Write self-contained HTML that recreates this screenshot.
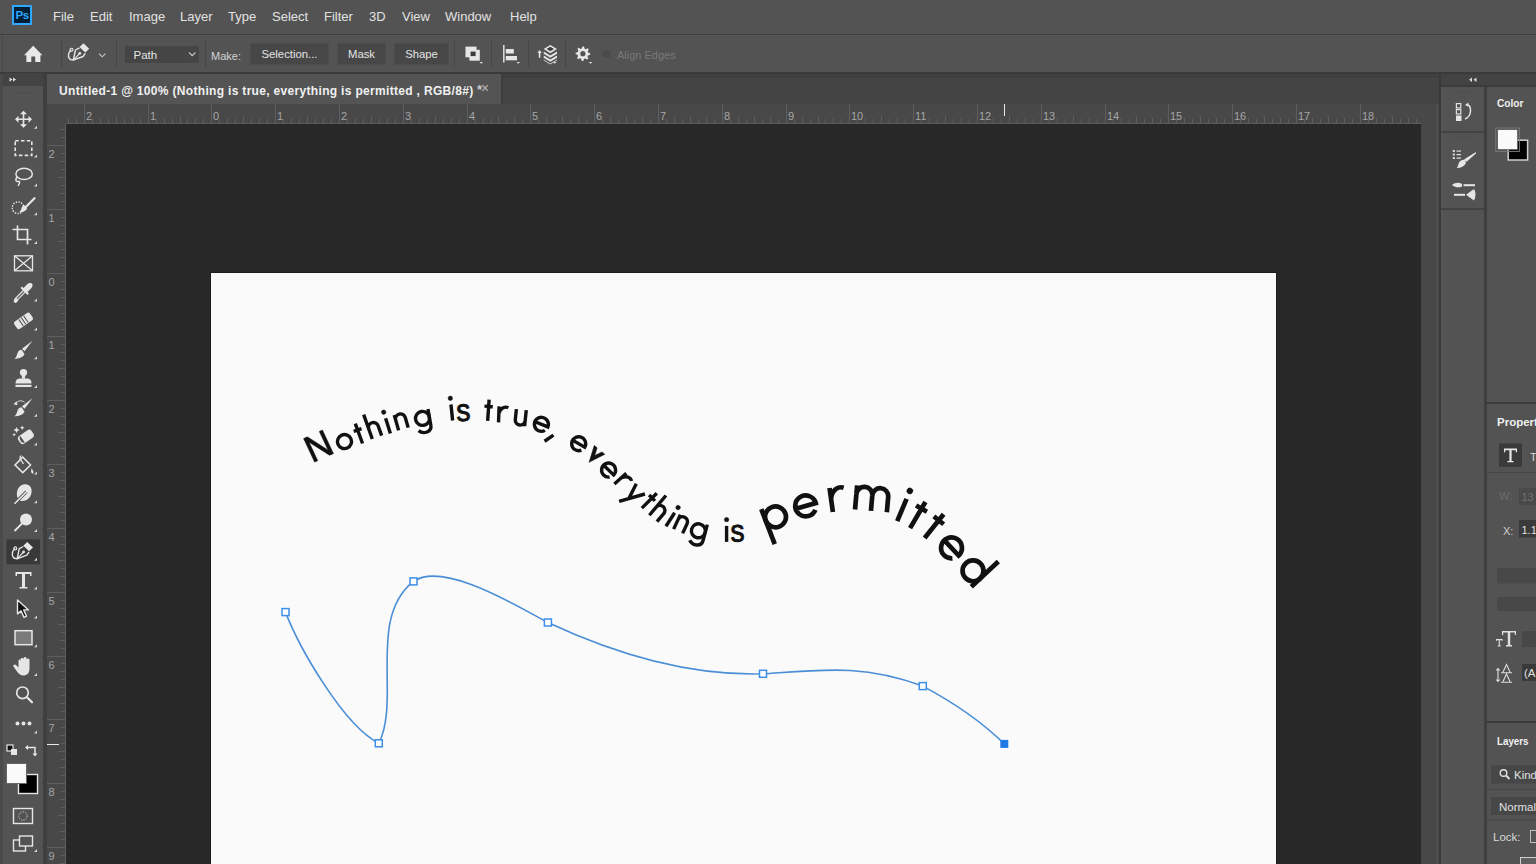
<!DOCTYPE html>
<html><head><meta charset="utf-8">
<style>
*{margin:0;padding:0;box-sizing:border-box}
html,body{width:1536px;height:864px;overflow:hidden;background:#535353;font-family:"Liberation Sans",sans-serif;color:#dcdcdc}
.a{position:absolute}
.m{position:absolute;top:9.5px;font-size:13px;color:#e2e2e2;line-height:14px;white-space:nowrap}
.btn{position:absolute;top:43px;height:22px;background:#474747;border:1px solid #4d4d4d;font-size:11.3px;color:#e4e4e4;text-align:center;line-height:20px;border-radius:1px}
.sep{position:absolute;top:40px;width:1px;height:27px;background:#474747}
svg{position:absolute;left:0;top:0}
</style></head><body>
<!-- menu bar -->
<div class="a" style="left:0;top:0;width:1536px;height:34px;background:#535353"></div>
<div class="a" style="left:12px;top:5px;width:20px;height:20px;background:#001e36;border:2px solid #31a8ff;border-radius:1px"></div>
<div class="a" style="left:15.5px;top:8.5px;font-size:11.5px;color:#31a8ff;line-height:12px;font-weight:bold;letter-spacing:-0.3px">Ps</div>
<span class="m" style="left:53px">File</span>
<span class="m" style="left:90px">Edit</span>
<span class="m" style="left:129px">Image</span>
<span class="m" style="left:180px">Layer</span>
<span class="m" style="left:228px">Type</span>
<span class="m" style="left:272px">Select</span>
<span class="m" style="left:324px">Filter</span>
<span class="m" style="left:369px">3D</span>
<span class="m" style="left:402px">View</span>
<span class="m" style="left:445px">Window</span>
<span class="m" style="left:510px">Help</span>
<!-- options bar -->
<div class="a" style="left:0;top:33.5px;width:1536px;height:1.5px;background:#3f3f3f"></div><div class="a" style="left:0;top:35px;width:1536px;height:1px;background:#575757"></div>
<div class="a" style="left:2px;top:35px;width:1px;height:37px;background:#4a4a4a"></div>
<div class="sep" style="left:61px"></div>
<div class="sep" style="left:116px"></div>
<div class="sep" style="left:205px"></div>
<div class="sep" style="left:454px"></div>
<div class="sep" style="left:491px"></div>
<div class="sep" style="left:528px"></div>
<div class="sep" style="left:565px"></div>
<div class="a" style="left:125px;top:46px;width:74px;height:17px;background:#454545"></div>
<div class="a" style="left:133.5px;top:47.5px;font-size:11.5px;color:#e4e4e4;line-height:14px">Path</div>
<div class="a" style="left:211px;top:48.5px;font-size:11px;color:#d4d4d4;line-height:14px">Make:</div>
<div class="btn" style="left:250px;width:79px">Selection...</div>
<div class="btn" style="left:337px;width:49px">Mask</div>
<div class="btn" style="left:394px;width:55px">Shape</div>
<div class="a" style="left:602px;top:50px;width:9px;height:8px;background:#4a4a4a;border:1px solid #505050"></div>
<div class="a" style="left:617px;top:49px;font-size:11px;color:#787878;line-height:12px">Align Edges</div>
<svg width="700" height="72">
<path d="M33.2,45.8 L24,55.3 H26.4 V62.1 H31.3 V56.5 H35.2 V62.1 H40.4 V55.3 H42.4Z" fill="#e8e8e8"/>
<g transform="translate(79.8,53.3)"><path d="M3.6,-10.1 L9.4,-4.6 L5.5,-0.7 L-0.3,-6.2Z" fill="#e6e6e6"/><path d="M-0.3,-5.5 L-4.3,-3.3 L-6.5,6.8 L3.2,3.2 L5.5,0" fill="none" stroke="#e6e6e6" stroke-width="1.4" stroke-linejoin="round"/><path d="M-6,6.3 L0,0" stroke="#e6e6e6" stroke-width="1.2"/><circle cx="0" cy="0" r="1.4" fill="#e6e6e6"/><path d="M-8.5,-3.5 C-11.5,-1.5 -12,3 -10.5,5 C-9.5,6.5 -8,6.8 -6.5,6.5" fill="none" stroke="#e6e6e6" stroke-width="1.4"/><circle cx="-8.3" cy="-3.6" r="1.5" fill="none" stroke="#e6e6e6" stroke-width="1.1"/></g>
<path d="M99,53.6 L102.2,56.8 L105.4,53.6" fill="none" stroke="#c8c8c8" stroke-width="1.1"/>
<path d="M189,52.5 L192.2,55.7 L195.4,52.5" fill="none" stroke="#c8c8c8" stroke-width="1.1"/>
<rect x="465.5" y="46.6" width="11" height="10.7" fill="#e6e6e6"/><rect x="469.4" y="49.8" width="10.4" height="10.9" fill="#e6e6e6"/><rect x="470.6" y="51.6" width="5" height="4.5" fill="#3a3a3a"/>
<path d="M479.5,62 L483,62 L481.2,63.8Z M516.5,62 L520,62 L518.2,63.8Z M553,62 L556.5,62 L554.8,63.8Z M588.8,62 L592.3,62 L590.5,63.8Z" fill="#e0e0e0"/>
<rect x="503" y="45" width="1.6" height="17.5" fill="#d8d8d8"/><rect x="505.8" y="49" width="8" height="4.5" fill="#e6e6e6"/><rect x="505.8" y="56" width="11.2" height="4.3" fill="#e6e6e6"/>
<path d="M539.6,50 L537.4,53 H538.8 V57.8 H540.4 V53 H541.8Z" fill="#e6e6e6"/>
<path d="M550.3,45 L557,49 L550.3,53.2 L543.7,49Z" fill="#e6e6e6"/><path d="M546.5,49 L550.3,46.8 L554,49 L550.3,51.2Z" fill="#3e3e3e"/>
<path d="M543.7,51.5 L550.3,55.5 L557,51.5 V53.7 L550.3,57.7 L543.7,53.7Z" fill="#e6e6e6"/>
<path d="M543.7,55.5 L550.3,59.5 L557,55.5 V57.7 L550.3,61.7 L543.7,57.7Z" fill="#e6e6e6"/>
<path d="M543.7,59.5 L550.3,63.5 L557,59.5 V60.5 L550.3,64.5 L543.7,60.5Z" fill="#cfcfcf"/>
<path d="M582.54,46.41 L583.97,46.48 L584.69,48.71 L585.62,49.15 L587.80,48.29 L588.76,49.35 L587.69,51.43 L588.04,52.41 L590.19,53.34 L590.12,54.77 L587.89,55.49 L587.45,56.42 L588.31,58.60 L587.25,59.56 L585.17,58.49 L584.19,58.84 L583.26,60.99 L581.83,60.92 L581.11,58.69 L580.18,58.25 L578.00,59.11 L577.04,58.05 L578.11,55.97 L577.76,54.99 L575.61,54.06 L575.68,52.63 L577.91,51.91 L578.35,50.98 L577.49,48.80 L578.55,47.84 L580.63,48.91 L581.61,48.56Z M585.5,53.7 A2.6,2.6 0 1,0 580.3,53.7 A2.6,2.6 0 1,0 585.5,53.7Z" fill="#e6e6e6" fill-rule="evenodd"/>

</svg>
<!-- dark line under options -->
<div class="a" style="left:0;top:72px;width:1536px;height:2px;background:#3a3a3a"></div>
<!-- left toolbar -->
<div class="a" style="left:0;top:74px;width:43px;height:790px;background:#535353"></div>
<div class="a" style="left:0;top:74px;width:3px;height:790px;background:#4a4a4a"></div>
<div class="a" style="left:2.5px;top:72.5px;width:41px;height:13.5px;background:#434343"></div>

<div class="a" style="left:43px;top:74px;width:4px;height:790px;background:#3f3f3f"></div>
<svg width="47" height="864">
<path d="M9.5,77.5 L12.5,79.6 L9.5,81.7Z M13,77.5 L16,79.6 L13,81.7Z" fill="#e0e0e0"/>
<g fill="#444"><circle cx="14" cy="93" r=".8"/><circle cx="18" cy="93" r=".8"/><circle cx="22" cy="93" r=".8"/><circle cx="26" cy="93" r=".8"/><circle cx="30" cy="93" r=".8"/></g>
<rect x="6.5" y="539.3" width="33.5" height="25" fill="#393939"/>
<g transform="translate(23.5,119.3)"><g stroke="#e6e6e6" stroke-width="1.6" fill="none"><path d="M-7,0H7M0,-7V7"/></g><g fill="#e6e6e6"><path d="M-8.5,0 L-5,-3.5 L-5,3.5Z M8.5,0 L5,-3.5 L5,3.5Z M0,-8.5 L-3.5,-5 L3.5,-5Z M0,8.5 L-3.5,5 L3.5,5Z"/></g></g><path d="M37.0,125.8 L37.0,128.8 L34.0,128.8Z" fill="#d8d8d8"/>
<g transform="translate(23.5,148.1)"><rect x="-8.3" y="-7.3" width="16.6" height="14.6" fill="none" stroke="#e6e6e6" stroke-width="1.6" stroke-dasharray="3.5,2.3"/></g><path d="M37.0,154.6 L37.0,157.6 L34.0,157.6Z" fill="#d8d8d8"/>
<g transform="translate(23.5,176.9)"><g fill="none" stroke="#e6e6e6" stroke-width="1.5"><ellipse cx="0.6" cy="-3" rx="8.2" ry="5.6"/><path d="M-6.5,0.5 C-9,3 -7,5 -5,4.5 C-3,4 -4,7 -5.5,9"/></g></g><path d="M37.0,183.4 L37.0,186.4 L34.0,186.4Z" fill="#d8d8d8"/>
<g transform="translate(23.5,205.7)"><circle cx="-5.5" cy="2" r="5.8" fill="none" stroke="#e6e6e6" stroke-width="1.4" stroke-dasharray="1.4,1.3"/><path d="M11,-7.5 L2.5,1" stroke="#e6e6e6" stroke-width="2.2" stroke-linecap="round"/><path d="M2.8,0.5 C1,-1 -1.5,0 -2,2.5 C-2.5,4.5 -3.5,6 -4.5,6.5 C-1,7 2,5.5 3.5,3Z" fill="#e6e6e6"/></g><path d="M37.0,212.2 L37.0,215.2 L34.0,215.2Z" fill="#d8d8d8"/>
<g transform="translate(23.5,234.5)"><g fill="none" stroke="#e6e6e6" stroke-width="1.7"><path d="M-6,-9 V5 H8"/><path d="M-11,-5 H4 V10"/></g></g><path d="M37.0,241.0 L37.0,244.0 L34.0,244.0Z" fill="#d8d8d8"/>
<g transform="translate(23.5,263.3)"><g fill="none" stroke="#e6e6e6" stroke-width="1.3"><rect x="-9" y="-7.5" width="18" height="15"/><path d="M-9,-7.5 L9,7.5 M9,-7.5 L-9,7.5"/></g></g>
<g transform="translate(23.5,292.1)"><path d="M-7,8 L-8,9 M-7.5,7.5 L2,-2" stroke="#e6e6e6" stroke-width="3.6" stroke-linecap="round" fill="none"/><path d="M-6.5,6.5 L1.5,-1.5" stroke="#535353" stroke-width="1.2"/><path d="M0,-4 L4,-8 C5,-9 7.5,-9.5 8.5,-8.5 C9.5,-7.5 9,-5 8,-4 L4,0 L5.5,1.5 L4,3 L-3,-4 L-1.5,-5.5Z" fill="#e6e6e6"/></g><path d="M37.0,298.6 L37.0,301.6 L34.0,301.6Z" fill="#d8d8d8"/>
<g transform="translate(23.5,320.9)"><g transform="rotate(-35)"><rect x="-9.5" y="-4.5" width="19" height="9" rx="2.5" fill="#e6e6e6"/><path d="M-3,-4 V4 M0,-4 V4 M3,-4 V4" stroke="#535353" stroke-width="1"/></g></g><path d="M37.0,327.4 L37.0,330.4 L34.0,330.4Z" fill="#d8d8d8"/>
<g transform="translate(23.5,349.7)"><path d="M9,-9 L1,1.5 L-1.5,-1 Z" fill="#e6e6e6"/><path d="M-1.8,0 C-5,0 -6,3 -6.5,5 C-7,7 -8,8 -9,9 C-5,9 -1,8 1,4.5 Z" fill="#e6e6e6"/></g><path d="M37.0,356.2 L37.0,359.2 L34.0,359.2Z" fill="#d8d8d8"/>
<g transform="translate(23.5,378.5)"><circle cx="0" cy="-6" r="3.6" fill="#e6e6e6"/><rect x="-1.6" y="-4" width="3.2" height="4" fill="#e6e6e6"/><path d="M-8,5 C-8,1 -6,0 -3,0 H3 C6,0 8,1 8,5Z" fill="#e6e6e6"/><rect x="-8" y="6.3" width="16" height="2.2" fill="#e6e6e6"/></g><path d="M37.0,385.0 L37.0,388.0 L34.0,388.0Z" fill="#d8d8d8"/>
<g transform="translate(23.5,407.3)"><path d="M9,-9 L1,1.5 L-1.5,-1 Z" fill="#e6e6e6"/><path d="M-1.8,0 C-5,0 -6,3 -6.5,5 C-7,7 -8,8 -9,9 C-5,9 -1,8 1,4.5 Z" fill="#e6e6e6"/><path d="M-10,-3 L-7,-6 L-6,-2Z" fill="#e6e6e6"/><path d="M-7,-4.5 C-5,-7 -1,-7 1,-5" fill="none" stroke="#e6e6e6" stroke-width="1"/></g><path d="M37.0,413.8 L37.0,416.8 L34.0,416.8Z" fill="#d8d8d8"/>
<g transform="translate(23.5,436.1)"><g transform="rotate(-35) translate(1.5,2)"><rect x="-8" y="-4.5" width="16" height="9" rx="3" fill="#e6e6e6"/><path d="M-4,-4 C-7,-4 -7.5,4 -4,4" fill="#535353"/></g><path d="M-8,-7 l1,-2 l1,2 l2,1 l-2,1 l-1,2 l-1,-2 l-2,-1Z M-2,-9 l.7,-1.5 l.7,1.5 l1.5,.7 l-1.5,.7 l-.7,1.5 l-.7,-1.5 l-1.5,-.7Z M-10,-2 l.6,-1.2 l.6,1.2 l1.2,.6 l-1.2,.6 l-.6,1.2 l-.6,-1.2 l-1.2,-.6Z" fill="#e6e6e6"/></g><path d="M37.0,442.6 L37.0,445.6 L34.0,445.6Z" fill="#d8d8d8"/>
<g transform="translate(23.5,464.9)"><g transform="rotate(45)"><rect x="-6" y="-5" width="11" height="11" fill="none" stroke="#e6e6e6" stroke-width="1.5"/></g><path d="M-2,-9 C-4,-9 -4,-5 -2,-4 L0,-1" fill="none" stroke="#e6e6e6" stroke-width="1.3"/><path d="M8,3 C9,5 10,6 10,7.5 C10,9 8,9 8,7.5 C7,6.5 8,5 8,3Z" fill="#e6e6e6"/></g><path d="M37.0,471.4 L37.0,474.4 L34.0,474.4Z" fill="#d8d8d8"/>
<g transform="translate(23.5,493.7)"><path d="M-6,4 C-8,-2 -5,-9 1,-9.5 C6,-10 9,-6 8,-1 C7,5 2,8 -3,7Z" fill="#e6e6e6"/><path d="M-8.5,9.5 L3,-2" stroke="#535353" stroke-width="3.2"/><path d="M-8.5,9.5 L3,-2" stroke="#e6e6e6" stroke-width="1.6" stroke-linecap="round"/></g><path d="M37.0,500.2 L37.0,503.2 L34.0,503.2Z" fill="#d8d8d8"/>
<g transform="translate(23.5,522.5)"><circle cx="2.5" cy="-3" r="6" fill="#e6e6e6"/><path d="M-1.5,1 L-9,8.5" stroke="#e6e6e6" stroke-width="1.8"/></g><path d="M37.0,529.0 L37.0,532.0 L34.0,532.0Z" fill="#d8d8d8"/>
<g transform="translate(23.6,552)"><path d="M3.6,-10.1 L9.4,-4.6 L5.5,-0.7 L-0.3,-6.2Z" fill="#e6e6e6"/><path d="M-0.3,-5.5 L-4.3,-3.3 L-6.5,6.8 L3.2,3.2 L5.5,0" fill="none" stroke="#e6e6e6" stroke-width="1.4" stroke-linejoin="round"/><path d="M-6,6.3 L0,0" stroke="#e6e6e6" stroke-width="1.2"/><circle cx="0" cy="0" r="1.4" fill="#e6e6e6"/><path d="M-8.5,-3.5 C-11.5,-1.5 -12,3 -10.5,5 C-9.5,6.5 -8,6.8 -6.5,6.5" fill="none" stroke="#e6e6e6" stroke-width="1.4"/><circle cx="-8.3" cy="-3.6" r="1.5" fill="none" stroke="#e6e6e6" stroke-width="1.1"/></g><path d="M37,557.8 L37,560.8 L34,560.8Z" fill="#d8d8d8"/>
<g transform="translate(23.5,580.1)"><path d="M-8,-8 H8 V-4 H6.5 V-6.2 H1.5 V7 H4 V8.5 H-4 V7 H-1.5 V-6.2 H-6.5 V-4 H-8Z" fill="#e6e6e6"/></g><path d="M37.0,586.6 L37.0,589.6 L34.0,589.6Z" fill="#d8d8d8"/>
<g transform="translate(23.5,608.9)"><path d="M-6,-9 L-6,5 L-2.5,2 L0.5,8.5 L3,7.3 L0.2,1 L5,1Z" fill="#111" stroke="#e6e6e6" stroke-width="1.4" stroke-linejoin="round"/></g><path d="M37.0,615.4 L37.0,618.4 L34.0,618.4Z" fill="#d8d8d8"/>
<g transform="translate(23.5,637.7)"><rect x="-8.5" y="-7" width="17" height="14" fill="#7a7a7a" stroke="#e6e6e6" stroke-width="1.5"/></g><path d="M37.0,644.2 L37.0,647.2 L34.0,647.2Z" fill="#d8d8d8"/>
<g transform="translate(23.5,666.5)"><path d="M-3,-7 C-3,-9 0,-9 0,-7 L0,-1 L0,-8 C0,-10 3,-10 3,-8 L3,-1 L3,-6.5 C3,-8.5 6,-8.5 6,-6.5 L6,2 C6,7 3,9 0,9 C-3,9 -5,7 -6.5,5 L-10,0 C-11,-1.5 -9,-3 -7.5,-1.5 L-5,1 L-5,-5.5 C-5,-7.5 -3,-7.5 -3,-5.5Z" fill="#e6e6e6"/></g><path d="M37.0,673.0 L37.0,676.0 L34.0,676.0Z" fill="#d8d8d8"/>
<g transform="translate(23.5,695.3)"><circle cx="-1" cy="-2.5" r="5.8" fill="none" stroke="#e6e6e6" stroke-width="1.7"/><path d="M3.5,2 L8.5,7" stroke="#e6e6e6" stroke-width="2.2" stroke-linecap="round"/></g>
<g transform="translate(23.5,724.1)"><circle cx="-6" cy="-0.5" r="2" fill="#e6e6e6"/><circle cx="0" cy="-0.5" r="2" fill="#e6e6e6"/><circle cx="6" cy="-0.5" r="2" fill="#e6e6e6"/></g><path d="M37.0,730.6 L37.0,733.6 L34.0,733.6Z" fill="#d8d8d8"/>
<rect x="7" y="745" width="6" height="6" fill="#111" stroke="#e6e6e6" stroke-width="1.2"/><rect x="11" y="749" width="6" height="6" fill="#e6e6e6"/>
<path d="M27,747.5 H35 V754" fill="none" stroke="#e6e6e6" stroke-width="1.5"/><path d="M25,747.5 L28,745 L28,750Z M35,756.5 L32.5,753.5 L37.5,753.5Z" fill="#e6e6e6"/>
<rect x="18.5" y="774.5" width="19" height="19" fill="#000" stroke="#e6e6e6" stroke-width="1.4"/>
<rect x="6.5" y="763.5" width="20" height="20" fill="#fafafa" stroke="#666" stroke-width="1"/>
<rect x="13.5" y="808.5" width="19" height="15" fill="none" stroke="#e6e6e6" stroke-width="1.4"/><circle cx="23" cy="816" r="4.2" fill="none" stroke="#cfcfcf" stroke-width="1" stroke-dasharray="1.2,1.2"/>
<rect x="13.5" y="840" width="12" height="11" fill="none" stroke="#e6e6e6" stroke-width="1.4"/><rect x="19.5" y="836" width="13" height="10" fill="#535353" stroke="#e6e6e6" stroke-width="1.4"/><path d="M37,849 L37,852 L34,852Z" fill="#d8d8d8"/>
</svg>
<!-- document area -->
<div class="a" style="left:47px;top:74px;width:1392px;height:30px;background:#434343"></div>
<div class="a" style="left:501px;top:74px;width:938px;height:4px;background:#404040"></div><div class="a" style="left:501px;top:78px;width:938px;height:1px;background:#474747"></div><div class="a" style="left:501px;top:74px;width:1.5px;height:30px;background:#3e3e3e"></div>
<div class="a" style="left:47px;top:74px;width:454px;height:30px;background:#545454"></div>
<div class="a" style="left:59px;top:85px;font-size:12px;font-weight:bold;color:#f0f0f0;white-space:nowrap;line-height:13px;letter-spacing:0.32px">Untitled-1 @ 100% (Nothing is true, everything is permitted , RGB/8#)</div>
<div class="a" style="left:477px;top:83px;font-size:13px;font-weight:bold;color:#c8c8c8;line-height:13px">*</div><div class="a" style="left:481px;top:82px;font-size:14px;color:#b8b8b8;line-height:13px">&#215;</div>
<div class="a" style="left:47px;top:104px;width:1374px;height:19px;background:#484848"></div>
<div class="a" style="left:47px;top:104px;width:19px;height:760px;background:#484848"></div>
<div class="a" style="left:66px;top:124px;width:1355px;height:740px;background:#282828"></div>
<div class="a" style="left:1421px;top:104px;width:18px;height:760px;background:#484848"></div><div class="a" style="left:1436px;top:104px;width:3px;height:760px;background:#4c4c4c"></div>
<svg width="1536" height="864" style="font-size:11.5px;font-family:'Liberation Sans'">
<line x1="66" y1="123.5" x2="1421" y2="123.5" stroke="#5c5c5c"/>
<line x1="65.5" y1="124" x2="65.5" y2="864" stroke="#5c5c5c"/>
<g stroke="#5e5e5e" stroke-width="1"><line x1="68.5" y1="117.5" x2="68.5" y2="123"/>
<line x1="76.5" y1="119" x2="76.5" y2="123"/>
<line x1="84.5" y1="104" x2="84.5" y2="123"/>
<text x="86.0" y="119.5" stroke="none" fill="#a6a6a6" font-size="11">2</text>
<line x1="92.5" y1="119" x2="92.5" y2="123"/>
<line x1="100.5" y1="117.5" x2="100.5" y2="123"/>
<line x1="108.5" y1="119" x2="108.5" y2="123"/>
<line x1="116.5" y1="116" x2="116.5" y2="123"/>
<line x1="124.5" y1="119" x2="124.5" y2="123"/>
<line x1="132.5" y1="117.5" x2="132.5" y2="123"/>
<line x1="140.5" y1="119" x2="140.5" y2="123"/>
<line x1="148.5" y1="104" x2="148.5" y2="123"/>
<text x="150.0" y="119.5" stroke="none" fill="#a6a6a6" font-size="11">1</text>
<line x1="156.5" y1="119" x2="156.5" y2="123"/>
<line x1="164.5" y1="117.5" x2="164.5" y2="123"/>
<line x1="172.5" y1="119" x2="172.5" y2="123"/>
<line x1="180.5" y1="116" x2="180.5" y2="123"/>
<line x1="187.5" y1="119" x2="187.5" y2="123"/>
<line x1="195.5" y1="117.5" x2="195.5" y2="123"/>
<line x1="203.5" y1="119" x2="203.5" y2="123"/>
<line x1="211.5" y1="104" x2="211.5" y2="123"/>
<text x="213.0" y="119.5" stroke="none" fill="#a6a6a6" font-size="11">0</text>
<line x1="219.5" y1="119" x2="219.5" y2="123"/>
<line x1="227.5" y1="117.5" x2="227.5" y2="123"/>
<line x1="235.5" y1="119" x2="235.5" y2="123"/>
<line x1="243.5" y1="116" x2="243.5" y2="123"/>
<line x1="251.5" y1="119" x2="251.5" y2="123"/>
<line x1="259.5" y1="117.5" x2="259.5" y2="123"/>
<line x1="267.5" y1="119" x2="267.5" y2="123"/>
<line x1="275.5" y1="104" x2="275.5" y2="123"/>
<text x="277.0" y="119.5" stroke="none" fill="#a6a6a6" font-size="11">1</text>
<line x1="283.5" y1="119" x2="283.5" y2="123"/>
<line x1="291.5" y1="117.5" x2="291.5" y2="123"/>
<line x1="299.5" y1="119" x2="299.5" y2="123"/>
<line x1="307.5" y1="116" x2="307.5" y2="123"/>
<line x1="315.5" y1="119" x2="315.5" y2="123"/>
<line x1="323.5" y1="117.5" x2="323.5" y2="123"/>
<line x1="331.5" y1="119" x2="331.5" y2="123"/>
<line x1="339.5" y1="104" x2="339.5" y2="123"/>
<text x="341.0" y="119.5" stroke="none" fill="#a6a6a6" font-size="11">2</text>
<line x1="347.5" y1="119" x2="347.5" y2="123"/>
<line x1="355.5" y1="117.5" x2="355.5" y2="123"/>
<line x1="363.5" y1="119" x2="363.5" y2="123"/>
<line x1="371.5" y1="116" x2="371.5" y2="123"/>
<line x1="379.5" y1="119" x2="379.5" y2="123"/>
<line x1="387.5" y1="117.5" x2="387.5" y2="123"/>
<line x1="395.5" y1="119" x2="395.5" y2="123"/>
<line x1="403.5" y1="104" x2="403.5" y2="123"/>
<text x="405.0" y="119.5" stroke="none" fill="#a6a6a6" font-size="11">3</text>
<line x1="411.5" y1="119" x2="411.5" y2="123"/>
<line x1="419.5" y1="117.5" x2="419.5" y2="123"/>
<line x1="427.5" y1="119" x2="427.5" y2="123"/>
<line x1="435.5" y1="116" x2="435.5" y2="123"/>
<line x1="443.5" y1="119" x2="443.5" y2="123"/>
<line x1="451.5" y1="117.5" x2="451.5" y2="123"/>
<line x1="459.5" y1="119" x2="459.5" y2="123"/>
<line x1="467.5" y1="104" x2="467.5" y2="123"/>
<text x="469.0" y="119.5" stroke="none" fill="#a6a6a6" font-size="11">4</text>
<line x1="475.5" y1="119" x2="475.5" y2="123"/>
<line x1="483.5" y1="117.5" x2="483.5" y2="123"/>
<line x1="491.5" y1="119" x2="491.5" y2="123"/>
<line x1="498.5" y1="116" x2="498.5" y2="123"/>
<line x1="506.5" y1="119" x2="506.5" y2="123"/>
<line x1="514.5" y1="117.5" x2="514.5" y2="123"/>
<line x1="522.5" y1="119" x2="522.5" y2="123"/>
<line x1="530.5" y1="104" x2="530.5" y2="123"/>
<text x="532.0" y="119.5" stroke="none" fill="#a6a6a6" font-size="11">5</text>
<line x1="538.5" y1="119" x2="538.5" y2="123"/>
<line x1="546.5" y1="117.5" x2="546.5" y2="123"/>
<line x1="554.5" y1="119" x2="554.5" y2="123"/>
<line x1="562.5" y1="116" x2="562.5" y2="123"/>
<line x1="570.5" y1="119" x2="570.5" y2="123"/>
<line x1="578.5" y1="117.5" x2="578.5" y2="123"/>
<line x1="586.5" y1="119" x2="586.5" y2="123"/>
<line x1="594.5" y1="104" x2="594.5" y2="123"/>
<text x="596.0" y="119.5" stroke="none" fill="#a6a6a6" font-size="11">6</text>
<line x1="602.5" y1="119" x2="602.5" y2="123"/>
<line x1="610.5" y1="117.5" x2="610.5" y2="123"/>
<line x1="618.5" y1="119" x2="618.5" y2="123"/>
<line x1="626.5" y1="116" x2="626.5" y2="123"/>
<line x1="634.5" y1="119" x2="634.5" y2="123"/>
<line x1="642.5" y1="117.5" x2="642.5" y2="123"/>
<line x1="650.5" y1="119" x2="650.5" y2="123"/>
<line x1="658.5" y1="104" x2="658.5" y2="123"/>
<text x="660.0" y="119.5" stroke="none" fill="#a6a6a6" font-size="11">7</text>
<line x1="666.5" y1="119" x2="666.5" y2="123"/>
<line x1="674.5" y1="117.5" x2="674.5" y2="123"/>
<line x1="682.5" y1="119" x2="682.5" y2="123"/>
<line x1="690.5" y1="116" x2="690.5" y2="123"/>
<line x1="698.5" y1="119" x2="698.5" y2="123"/>
<line x1="706.5" y1="117.5" x2="706.5" y2="123"/>
<line x1="714.5" y1="119" x2="714.5" y2="123"/>
<line x1="722.5" y1="104" x2="722.5" y2="123"/>
<text x="724.0" y="119.5" stroke="none" fill="#a6a6a6" font-size="11">8</text>
<line x1="730.5" y1="119" x2="730.5" y2="123"/>
<line x1="738.5" y1="117.5" x2="738.5" y2="123"/>
<line x1="746.5" y1="119" x2="746.5" y2="123"/>
<line x1="754.5" y1="116" x2="754.5" y2="123"/>
<line x1="762.5" y1="119" x2="762.5" y2="123"/>
<line x1="770.5" y1="117.5" x2="770.5" y2="123"/>
<line x1="778.5" y1="119" x2="778.5" y2="123"/>
<line x1="786.5" y1="104" x2="786.5" y2="123"/>
<text x="788.0" y="119.5" stroke="none" fill="#a6a6a6" font-size="11">9</text>
<line x1="794.5" y1="119" x2="794.5" y2="123"/>
<line x1="802.5" y1="117.5" x2="802.5" y2="123"/>
<line x1="810.5" y1="119" x2="810.5" y2="123"/>
<line x1="818.5" y1="116" x2="818.5" y2="123"/>
<line x1="825.5" y1="119" x2="825.5" y2="123"/>
<line x1="833.5" y1="117.5" x2="833.5" y2="123"/>
<line x1="841.5" y1="119" x2="841.5" y2="123"/>
<line x1="849.5" y1="104" x2="849.5" y2="123"/>
<text x="851.0" y="119.5" stroke="none" fill="#a6a6a6" font-size="11">10</text>
<line x1="857.5" y1="119" x2="857.5" y2="123"/>
<line x1="865.5" y1="117.5" x2="865.5" y2="123"/>
<line x1="873.5" y1="119" x2="873.5" y2="123"/>
<line x1="881.5" y1="116" x2="881.5" y2="123"/>
<line x1="889.5" y1="119" x2="889.5" y2="123"/>
<line x1="897.5" y1="117.5" x2="897.5" y2="123"/>
<line x1="905.5" y1="119" x2="905.5" y2="123"/>
<line x1="913.5" y1="104" x2="913.5" y2="123"/>
<text x="915.0" y="119.5" stroke="none" fill="#a6a6a6" font-size="11">11</text>
<line x1="921.5" y1="119" x2="921.5" y2="123"/>
<line x1="929.5" y1="117.5" x2="929.5" y2="123"/>
<line x1="937.5" y1="119" x2="937.5" y2="123"/>
<line x1="945.5" y1="116" x2="945.5" y2="123"/>
<line x1="953.5" y1="119" x2="953.5" y2="123"/>
<line x1="961.5" y1="117.5" x2="961.5" y2="123"/>
<line x1="969.5" y1="119" x2="969.5" y2="123"/>
<line x1="977.5" y1="104" x2="977.5" y2="123"/>
<text x="979.0" y="119.5" stroke="none" fill="#a6a6a6" font-size="11">12</text>
<line x1="985.5" y1="119" x2="985.5" y2="123"/>
<line x1="993.5" y1="117.5" x2="993.5" y2="123"/>
<line x1="1001.5" y1="119" x2="1001.5" y2="123"/>
<line x1="1009.5" y1="116" x2="1009.5" y2="123"/>
<line x1="1017.5" y1="119" x2="1017.5" y2="123"/>
<line x1="1025.5" y1="117.5" x2="1025.5" y2="123"/>
<line x1="1033.5" y1="119" x2="1033.5" y2="123"/>
<line x1="1041.5" y1="104" x2="1041.5" y2="123"/>
<text x="1043.0" y="119.5" stroke="none" fill="#a6a6a6" font-size="11">13</text>
<line x1="1049.5" y1="119" x2="1049.5" y2="123"/>
<line x1="1057.5" y1="117.5" x2="1057.5" y2="123"/>
<line x1="1065.5" y1="119" x2="1065.5" y2="123"/>
<line x1="1073.5" y1="116" x2="1073.5" y2="123"/>
<line x1="1081.5" y1="119" x2="1081.5" y2="123"/>
<line x1="1089.5" y1="117.5" x2="1089.5" y2="123"/>
<line x1="1097.5" y1="119" x2="1097.5" y2="123"/>
<line x1="1105.5" y1="104" x2="1105.5" y2="123"/>
<text x="1107.0" y="119.5" stroke="none" fill="#a6a6a6" font-size="11">14</text>
<line x1="1113.5" y1="119" x2="1113.5" y2="123"/>
<line x1="1121.5" y1="117.5" x2="1121.5" y2="123"/>
<line x1="1129.5" y1="119" x2="1129.5" y2="123"/>
<line x1="1136.5" y1="116" x2="1136.5" y2="123"/>
<line x1="1144.5" y1="119" x2="1144.5" y2="123"/>
<line x1="1152.5" y1="117.5" x2="1152.5" y2="123"/>
<line x1="1160.5" y1="119" x2="1160.5" y2="123"/>
<line x1="1168.5" y1="104" x2="1168.5" y2="123"/>
<text x="1170.0" y="119.5" stroke="none" fill="#a6a6a6" font-size="11">15</text>
<line x1="1176.5" y1="119" x2="1176.5" y2="123"/>
<line x1="1184.5" y1="117.5" x2="1184.5" y2="123"/>
<line x1="1192.5" y1="119" x2="1192.5" y2="123"/>
<line x1="1200.5" y1="116" x2="1200.5" y2="123"/>
<line x1="1208.5" y1="119" x2="1208.5" y2="123"/>
<line x1="1216.5" y1="117.5" x2="1216.5" y2="123"/>
<line x1="1224.5" y1="119" x2="1224.5" y2="123"/>
<line x1="1232.5" y1="104" x2="1232.5" y2="123"/>
<text x="1234.0" y="119.5" stroke="none" fill="#a6a6a6" font-size="11">16</text>
<line x1="1240.5" y1="119" x2="1240.5" y2="123"/>
<line x1="1248.5" y1="117.5" x2="1248.5" y2="123"/>
<line x1="1256.5" y1="119" x2="1256.5" y2="123"/>
<line x1="1264.5" y1="116" x2="1264.5" y2="123"/>
<line x1="1272.5" y1="119" x2="1272.5" y2="123"/>
<line x1="1280.5" y1="117.5" x2="1280.5" y2="123"/>
<line x1="1288.5" y1="119" x2="1288.5" y2="123"/>
<line x1="1296.5" y1="104" x2="1296.5" y2="123"/>
<text x="1298.0" y="119.5" stroke="none" fill="#a6a6a6" font-size="11">17</text>
<line x1="1304.5" y1="119" x2="1304.5" y2="123"/>
<line x1="1312.5" y1="117.5" x2="1312.5" y2="123"/>
<line x1="1320.5" y1="119" x2="1320.5" y2="123"/>
<line x1="1328.5" y1="116" x2="1328.5" y2="123"/>
<line x1="1336.5" y1="119" x2="1336.5" y2="123"/>
<line x1="1344.5" y1="117.5" x2="1344.5" y2="123"/>
<line x1="1352.5" y1="119" x2="1352.5" y2="123"/>
<line x1="1360.5" y1="104" x2="1360.5" y2="123"/>
<text x="1362.0" y="119.5" stroke="none" fill="#a6a6a6" font-size="11">18</text>
<line x1="1368.5" y1="119" x2="1368.5" y2="123"/>
<line x1="1376.5" y1="117.5" x2="1376.5" y2="123"/>
<line x1="1384.5" y1="119" x2="1384.5" y2="123"/>
<line x1="1392.5" y1="116" x2="1392.5" y2="123"/>
<line x1="1400.5" y1="119" x2="1400.5" y2="123"/>
<line x1="1408.5" y1="117.5" x2="1408.5" y2="123"/>
<line x1="1416.5" y1="119" x2="1416.5" y2="123"/>
<line x1="59.5" y1="129.5" x2="65" y2="129.5"/>
<line x1="61" y1="137.5" x2="65" y2="137.5"/>
<line x1="47" y1="145.5" x2="65" y2="145.5"/>
<text x="48.5" y="157.5" stroke="none" fill="#a6a6a6" font-size="11">2</text>
<line x1="61" y1="153.5" x2="65" y2="153.5"/>
<line x1="59.5" y1="161.5" x2="65" y2="161.5"/>
<line x1="61" y1="169.5" x2="65" y2="169.5"/>
<line x1="58" y1="177.5" x2="65" y2="177.5"/>
<line x1="61" y1="185.5" x2="65" y2="185.5"/>
<line x1="59.5" y1="193.5" x2="65" y2="193.5"/>
<line x1="61" y1="201.5" x2="65" y2="201.5"/>
<line x1="47" y1="209.5" x2="65" y2="209.5"/>
<text x="48.5" y="221.5" stroke="none" fill="#a6a6a6" font-size="11">1</text>
<line x1="61" y1="217.5" x2="65" y2="217.5"/>
<line x1="59.5" y1="225.5" x2="65" y2="225.5"/>
<line x1="61" y1="233.5" x2="65" y2="233.5"/>
<line x1="58" y1="241.5" x2="65" y2="241.5"/>
<line x1="61" y1="249.5" x2="65" y2="249.5"/>
<line x1="59.5" y1="257.5" x2="65" y2="257.5"/>
<line x1="61" y1="265.5" x2="65" y2="265.5"/>
<line x1="47" y1="273.5" x2="65" y2="273.5"/>
<text x="48.5" y="285.5" stroke="none" fill="#a6a6a6" font-size="11">0</text>
<line x1="61" y1="281.5" x2="65" y2="281.5"/>
<line x1="59.5" y1="289.5" x2="65" y2="289.5"/>
<line x1="61" y1="297.5" x2="65" y2="297.5"/>
<line x1="58" y1="305.5" x2="65" y2="305.5"/>
<line x1="61" y1="313.5" x2="65" y2="313.5"/>
<line x1="59.5" y1="321.5" x2="65" y2="321.5"/>
<line x1="61" y1="329.5" x2="65" y2="329.5"/>
<line x1="47" y1="336.5" x2="65" y2="336.5"/>
<text x="48.5" y="348.5" stroke="none" fill="#a6a6a6" font-size="11">1</text>
<line x1="61" y1="344.5" x2="65" y2="344.5"/>
<line x1="59.5" y1="352.5" x2="65" y2="352.5"/>
<line x1="61" y1="360.5" x2="65" y2="360.5"/>
<line x1="58" y1="368.5" x2="65" y2="368.5"/>
<line x1="61" y1="376.5" x2="65" y2="376.5"/>
<line x1="59.5" y1="384.5" x2="65" y2="384.5"/>
<line x1="61" y1="392.5" x2="65" y2="392.5"/>
<line x1="47" y1="400.5" x2="65" y2="400.5"/>
<text x="48.5" y="412.5" stroke="none" fill="#a6a6a6" font-size="11">2</text>
<line x1="61" y1="408.5" x2="65" y2="408.5"/>
<line x1="59.5" y1="416.5" x2="65" y2="416.5"/>
<line x1="61" y1="424.5" x2="65" y2="424.5"/>
<line x1="58" y1="432.5" x2="65" y2="432.5"/>
<line x1="61" y1="440.5" x2="65" y2="440.5"/>
<line x1="59.5" y1="448.5" x2="65" y2="448.5"/>
<line x1="61" y1="456.5" x2="65" y2="456.5"/>
<line x1="47" y1="464.5" x2="65" y2="464.5"/>
<text x="48.5" y="476.5" stroke="none" fill="#a6a6a6" font-size="11">3</text>
<line x1="61" y1="472.5" x2="65" y2="472.5"/>
<line x1="59.5" y1="480.5" x2="65" y2="480.5"/>
<line x1="61" y1="488.5" x2="65" y2="488.5"/>
<line x1="58" y1="496.5" x2="65" y2="496.5"/>
<line x1="61" y1="504.5" x2="65" y2="504.5"/>
<line x1="59.5" y1="512.5" x2="65" y2="512.5"/>
<line x1="61" y1="520.5" x2="65" y2="520.5"/>
<line x1="47" y1="528.5" x2="65" y2="528.5"/>
<text x="48.5" y="540.5" stroke="none" fill="#a6a6a6" font-size="11">4</text>
<line x1="61" y1="536.5" x2="65" y2="536.5"/>
<line x1="59.5" y1="544.5" x2="65" y2="544.5"/>
<line x1="61" y1="552.5" x2="65" y2="552.5"/>
<line x1="58" y1="560.5" x2="65" y2="560.5"/>
<line x1="61" y1="568.5" x2="65" y2="568.5"/>
<line x1="59.5" y1="576.5" x2="65" y2="576.5"/>
<line x1="61" y1="584.5" x2="65" y2="584.5"/>
<line x1="47" y1="592.5" x2="65" y2="592.5"/>
<text x="48.5" y="604.5" stroke="none" fill="#a6a6a6" font-size="11">5</text>
<line x1="61" y1="600.5" x2="65" y2="600.5"/>
<line x1="59.5" y1="608.5" x2="65" y2="608.5"/>
<line x1="61" y1="616.5" x2="65" y2="616.5"/>
<line x1="58" y1="624.5" x2="65" y2="624.5"/>
<line x1="61" y1="632.5" x2="65" y2="632.5"/>
<line x1="59.5" y1="640.5" x2="65" y2="640.5"/>
<line x1="61" y1="648.5" x2="65" y2="648.5"/>
<line x1="47" y1="656.5" x2="65" y2="656.5"/>
<text x="48.5" y="668.5" stroke="none" fill="#a6a6a6" font-size="11">6</text>
<line x1="61" y1="663.5" x2="65" y2="663.5"/>
<line x1="59.5" y1="671.5" x2="65" y2="671.5"/>
<line x1="61" y1="679.5" x2="65" y2="679.5"/>
<line x1="58" y1="687.5" x2="65" y2="687.5"/>
<line x1="61" y1="695.5" x2="65" y2="695.5"/>
<line x1="59.5" y1="703.5" x2="65" y2="703.5"/>
<line x1="61" y1="711.5" x2="65" y2="711.5"/>
<line x1="47" y1="719.5" x2="65" y2="719.5"/>
<text x="48.5" y="731.5" stroke="none" fill="#a6a6a6" font-size="11">7</text>
<line x1="61" y1="727.5" x2="65" y2="727.5"/>
<line x1="59.5" y1="735.5" x2="65" y2="735.5"/>
<line x1="61" y1="743.5" x2="65" y2="743.5"/>
<line x1="58" y1="751.5" x2="65" y2="751.5"/>
<line x1="61" y1="759.5" x2="65" y2="759.5"/>
<line x1="59.5" y1="767.5" x2="65" y2="767.5"/>
<line x1="61" y1="775.5" x2="65" y2="775.5"/>
<line x1="47" y1="783.5" x2="65" y2="783.5"/>
<text x="48.5" y="795.5" stroke="none" fill="#a6a6a6" font-size="11">8</text>
<line x1="61" y1="791.5" x2="65" y2="791.5"/>
<line x1="59.5" y1="799.5" x2="65" y2="799.5"/>
<line x1="61" y1="807.5" x2="65" y2="807.5"/>
<line x1="58" y1="815.5" x2="65" y2="815.5"/>
<line x1="61" y1="823.5" x2="65" y2="823.5"/>
<line x1="59.5" y1="831.5" x2="65" y2="831.5"/>
<line x1="61" y1="839.5" x2="65" y2="839.5"/>
<line x1="47" y1="847.5" x2="65" y2="847.5"/>
<text x="48.5" y="859.5" stroke="none" fill="#a6a6a6" font-size="11">9</text>
<line x1="61" y1="855.5" x2="65" y2="855.5"/>
<line x1="59.5" y1="863.5" x2="65" y2="863.5"/></g>
<line x1="1004.5" y1="104" x2="1004.5" y2="116" stroke="#e8e8e8"/>
<line x1="47" y1="744.5" x2="59" y2="744.5" stroke="#e8e8e8"/>
</svg>
<!-- canvas -->
<div class="a" style="left:211px;top:272.5px;width:1065px;height:592px;background:#fafafa;box-shadow:0 0 0 1px #1c1c1c"></div>
<svg width="1536" height="864">
<g fill="#111" stroke="#111" stroke-width="0.5" font-family="'Liberation Sans'" text-anchor="middle">
<g transform="translate(320.6,450.5) rotate(-25.0) translate(0,8.00)"><path d="M-10.32,0 V-25.80 H-6.92 V0Z M6.92,0 V-25.80 H10.32 V0Z M-10.32,-25.80 L-6.07,-25.80 L10.32,0 L6.07,0Z" fill="#111"/></g>
<g transform="translate(344.5,441.6) rotate(-23.0) translate(0,8.00)"><circle cx="0" cy="-8.00" r="7.00" fill="none" stroke="#111" stroke-width="3.40"/></g>
<g transform="translate(359.8,436.0) rotate(-20.0) translate(0,8.00)"><path d="M0,-21.16 V0 M-4.16,-14.40 H4.16" fill="none" stroke="#111" stroke-width="3.40" stroke-linecap="butt" stroke-linejoin="miter"/></g>
<g transform="translate(374.3,429.8) rotate(-19.5) translate(0,8.00)"><path d="M-4.96,-25.80 V0 M-4.96,-10.54 A4.96,4.96 0 0 1 4.96,-10.54 V0" fill="none" stroke="#111" stroke-width="3.40" stroke-linecap="butt" stroke-linejoin="miter"/></g>
<g transform="translate(388.0,425.8) rotate(-17.5) translate(0,8.00)"><path d="M0,-16.00 V0" fill="none" stroke="#111" stroke-width="3.40" stroke-linecap="butt" stroke-linejoin="miter"/><circle cx="0" cy="-22.27" r="2.20" fill="#111"/></g>
<g transform="translate(401.2,421.3) rotate(-16.0) translate(0,8.00)"><path d="M-4.96,-16.00 V0 M-4.96,-10.54 A4.96,4.96 0 0 1 4.96,-10.54 V0" fill="none" stroke="#111" stroke-width="3.40" stroke-linecap="butt" stroke-linejoin="miter"/></g>
<g transform="translate(422.5,418.4) rotate(-10.0) translate(0,8.00)"><path d="M7.00,-16.30 V0.43 C7.00,6.80 -1.78,8.33 -5.95,3.40" fill="none" stroke="#111" stroke-width="3.40" stroke-linecap="butt" stroke-linejoin="miter"/><circle cx="0" cy="-8.00" r="7.00" fill="none" stroke="#111" stroke-width="3.40"/></g>
<g transform="translate(451.8,412.5) rotate(-6.0) translate(0,8.00)"><path d="M0,-16.00 V0" fill="none" stroke="#111" stroke-width="3.40" stroke-linecap="butt" stroke-linejoin="miter"/><circle cx="0" cy="-22.27" r="2.20" fill="#111"/></g>
<g transform="translate(463.3,412.8) rotate(-3.0) translate(0,8.00)"><text x="0" y="0" font-size="32" text-anchor="middle" fill="#111" stroke="#111" stroke-width="0.9" transform="scale(0.88,0.97)">s</text></g>
<g transform="translate(488.2,412.8) rotate(4.0) translate(0,8.00)"><path d="M0,-21.16 V0 M-4.16,-14.40 H4.16" fill="none" stroke="#111" stroke-width="3.40" stroke-linecap="butt" stroke-linejoin="miter"/></g>
<g transform="translate(502.0,414.5) rotate(2.0) translate(0,8.00)"><path d="M-3.20,-16.00 V0 M-3.20,-8.80 C-1.60,-15.20 3.20,-16.32 6.08,-14.88" fill="none" stroke="#111" stroke-width="3.40" stroke-linecap="butt" stroke-linejoin="miter"/></g>
<g transform="translate(520.5,417.6) rotate(6.0) translate(0,8.00)"><path d="M-4.96,-16.00 V-5.46 A4.96,4.96 0 0 0 4.96,-5.46 M4.96,-16.00 V0" fill="none" stroke="#111" stroke-width="3.40" stroke-linecap="butt" stroke-linejoin="miter"/></g>
<g transform="translate(541.4,424.3) rotate(22.0) translate(0,8.00)"><path d="M-8.70,-8.00 H7.00 A7.00,7.00 0 1 0 5.52,-3.69" fill="none" stroke="#111" stroke-width="3.40" stroke-linecap="butt" stroke-linejoin="miter"/></g>
<g transform="translate(549.2,437.6) rotate(28.0) translate(0,0.00)"><path d="M2.60,-4.20 L-2.40,5.40" fill="none" stroke="#111" stroke-width="3.40" stroke-linecap="butt" stroke-linejoin="miter"/></g>
<g transform="translate(578.7,443.7) rotate(30.0) translate(0,8.00)"><path d="M-8.70,-8.00 H7.00 A7.00,7.00 0 1 0 5.52,-3.69" fill="none" stroke="#111" stroke-width="3.40" stroke-linecap="butt" stroke-linejoin="miter"/></g>
<g transform="translate(594.4,456.0) rotate(40.0) translate(0,8.00)"><path d="M-6.88,-16.00 L-3.18,-16.00 L0,-8.61 L3.18,-16.00 L6.88,-16.00 L0,0.3Z" fill="#111"/></g>
<g transform="translate(608.6,470.1) rotate(44.0) translate(0,8.00)"><path d="M-8.70,-8.00 H7.00 A7.00,7.00 0 1 0 5.52,-3.69" fill="none" stroke="#111" stroke-width="3.40" stroke-linecap="butt" stroke-linejoin="miter"/></g>
<g transform="translate(622.5,481.0) rotate(48.0) translate(0,8.00)"><path d="M-3.20,-16.00 V0 M-3.20,-8.80 C-1.60,-15.20 3.20,-16.32 6.08,-14.88" fill="none" stroke="#111" stroke-width="3.40" stroke-linecap="butt" stroke-linejoin="miter"/></g>
<g transform="translate(634.5,494.0) rotate(50.0) translate(0,8.00)"><path d="M-6.72,-16.00 L0.00,-0.50 M6.72,-16.00 L-4.30,8.50" fill="none" stroke="#111" stroke-width="3.40" stroke-linecap="butt" stroke-linejoin="miter"/></g>
<g transform="translate(647.5,502.5) rotate(45.0) translate(0,8.00)"><path d="M0,-21.16 V0 M-4.16,-14.40 H4.16" fill="none" stroke="#111" stroke-width="3.40" stroke-linecap="butt" stroke-linejoin="miter"/></g>
<g transform="translate(658.3,512.3) rotate(40.0) translate(0,8.00)"><path d="M-4.96,-25.80 V0 M-4.96,-10.54 A4.96,4.96 0 0 1 4.96,-10.54 V0" fill="none" stroke="#111" stroke-width="3.40" stroke-linecap="butt" stroke-linejoin="miter"/></g>
<g transform="translate(670.3,519.5) rotate(33.0) translate(0,8.00)"><path d="M0,-16.00 V0" fill="none" stroke="#111" stroke-width="3.40" stroke-linecap="butt" stroke-linejoin="miter"/><circle cx="0" cy="-22.27" r="2.20" fill="#111"/></g>
<g transform="translate(681.5,524.0) rotate(25.0) translate(0,8.00)"><path d="M-4.96,-16.00 V0 M-4.96,-10.54 A4.96,4.96 0 0 1 4.96,-10.54 V0" fill="none" stroke="#111" stroke-width="3.40" stroke-linecap="butt" stroke-linejoin="miter"/></g>
<g transform="translate(698.4,530.8) rotate(15.0) translate(0,8.00)"><path d="M7.00,-16.30 V0.43 C7.00,6.80 -1.78,8.33 -5.95,3.40" fill="none" stroke="#111" stroke-width="3.40" stroke-linecap="butt" stroke-linejoin="miter"/><circle cx="0" cy="-8.00" r="7.00" fill="none" stroke="#111" stroke-width="3.40"/></g>
<g transform="translate(726.6,533.9) rotate(0.0) translate(0,8.00)"><path d="M0,-16.00 V0" fill="none" stroke="#111" stroke-width="3.40" stroke-linecap="butt" stroke-linejoin="miter"/><circle cx="0" cy="-22.27" r="2.20" fill="#111"/></g>
<g transform="translate(737.5,533.6) rotate(-2.0) translate(0,8.00)"><text x="0" y="0" font-size="32" text-anchor="middle" fill="#111" stroke="#111" stroke-width="0.9" transform="scale(0.88,0.97)">s</text></g>
<g transform="translate(775.5,516.9) rotate(-21.0) translate(0,12.10)"><path d="M-10.45,-24.50 V13.00" fill="none" stroke="#111" stroke-width="4.70" stroke-linecap="butt" stroke-linejoin="miter"/><circle cx="0" cy="-12.10" r="10.45" fill="none" stroke="#111" stroke-width="4.70"/></g>
<g transform="translate(805.7,505.9) rotate(-16.0) translate(0,12.10)"><path d="M-12.80,-12.10 H10.45 A10.45,10.45 0 1 0 8.23,-5.67" fill="none" stroke="#111" stroke-width="4.70" stroke-linecap="butt" stroke-linejoin="miter"/></g>
<g transform="translate(836.0,499.3) rotate(-8.0) translate(0,12.10)"><path d="M-4.84,-24.20 V0 M-4.84,-13.31 C-2.42,-22.99 4.84,-24.68 9.20,-22.51" fill="none" stroke="#111" stroke-width="4.70" stroke-linecap="butt" stroke-linejoin="miter"/></g>
<g transform="translate(872.0,498.8) rotate(5.0) translate(0,12.10)"><path d="M-15.97,-24.20 V0 M-15.97,-15.71 A7.99,7.99 0 0 1 0,-15.71 V0 M0,-15.71 A7.99,7.99 0 0 1 15.97,-15.71 V0" fill="none" stroke="#111" stroke-width="4.70" stroke-linecap="butt" stroke-linejoin="miter"/></g>
<g transform="translate(901.9,510.0) rotate(22.7) translate(0,12.10)"><path d="M0,-24.20 V0" fill="none" stroke="#111" stroke-width="4.70" stroke-linecap="butt" stroke-linejoin="miter"/><circle cx="0" cy="-32.75" r="3.00" fill="#111"/></g>
<g transform="translate(916.2,517.7) rotate(30.4) translate(0,12.10)"><path d="M0,-30.34 V0 M-6.29,-22.60 H6.29" fill="none" stroke="#111" stroke-width="4.70" stroke-linecap="butt" stroke-linejoin="miter"/></g>
<g transform="translate(932.2,528.5) rotate(38.7) translate(0,12.10)"><path d="M0,-30.34 V0 M-6.29,-22.60 H6.29" fill="none" stroke="#111" stroke-width="4.70" stroke-linecap="butt" stroke-linejoin="miter"/></g>
<g transform="translate(951.5,547.9) rotate(47.0) translate(0,12.10)"><path d="M-12.80,-12.10 H10.45 A10.45,10.45 0 1 0 8.23,-5.67" fill="none" stroke="#111" stroke-width="4.70" stroke-linecap="butt" stroke-linejoin="miter"/></g>
<g transform="translate(973.0,570.8) rotate(47.0) translate(0,12.10)"><path d="M10.45,-37.00 V0" fill="none" stroke="#111" stroke-width="4.70" stroke-linecap="butt" stroke-linejoin="miter"/><circle cx="0" cy="-12.10" r="10.45" fill="none" stroke="#111" stroke-width="4.70"/></g>
</g>
<path d="M285.5,612.1 C299.0,647.0 343.0,725.0 378.8,743.3 C401.0,699.5 367.0,618.0 413.5,581.4 C444.1,560.3 520.6,608.2 547.9,622.5 C615.0,653.9 688.4,676.0 763.0,673.8 C823.4,669.7 863.7,664.2 922.8,686.1 C952.3,701.8 980.4,720.4 1004.3,743.9" fill="none" stroke="#4a8ed6" stroke-width="1.6"/>
<g fill="#fff" stroke="#3d8fe8" stroke-width="1.5">
<rect x="282" y="608.6" width="7" height="7"/>
<rect x="375.3" y="739.8" width="7" height="7"/>
<rect x="410" y="577.9" width="7" height="7"/>
<rect x="544.4" y="619" width="7" height="7"/>
<rect x="759.5" y="670.3" width="7" height="7"/>
<rect x="919.3" y="682.6" width="7" height="7"/>
</g>
<rect x="1000.3" y="739.9" width="8" height="8" fill="#1f7ae6"/>
</svg>
<!-- right panels -->
<div class="a" style="left:1439px;top:74px;width:2px;height:790px;background:#393939"></div>
<div class="a" style="left:1441px;top:74px;width:95px;height:790px;background:#535353"></div>
<div class="a" style="left:1441px;top:74px;width:95px;height:11px;background:#434343"></div>
<div class="a" style="left:1441px;top:85px;width:95px;height:2px;background:#3b3b3b"></div>
<div class="a" style="left:1441px;top:87px;width:2px;height:777px;background:#575757"></div>
<div class="a" style="left:1441px;top:131px;width:43px;height:2px;background:#434343"></div>
<div class="a" style="left:1441px;top:208px;width:43px;height:2px;background:#434343"></div>
<div class="a" style="left:1484px;top:87px;width:3px;height:777px;background:#3f3f3f"></div>
<div class="a" style="left:1487px;top:402px;width:49px;height:2px;background:#3b3b3b"></div>
<div class="a" style="left:1487px;top:721px;width:49px;height:2px;background:#3b3b3b"></div>
<svg width="1536" height="864">
<path d="M1472,77.5 L1469,79.8 L1472,82Z M1476.5,77.5 L1473.5,79.8 L1476.5,82Z" fill="#d8d8d8"/>
<g fill="#4a4a4a"><rect x="1453" y="91.5" width="1.4" height="1.4"/><rect x="1457" y="91.5" width="1.4" height="1.4"/><rect x="1461" y="91.5" width="1.4" height="1.4"/><rect x="1465" y="91.5" width="1.4" height="1.4"/><rect x="1469" y="91.5" width="1.4" height="1.4"/>
<rect x="1453" y="137" width="1.4" height="1.4"/><rect x="1457" y="137" width="1.4" height="1.4"/><rect x="1461" y="137" width="1.4" height="1.4"/><rect x="1465" y="137" width="1.4" height="1.4"/><rect x="1469" y="137" width="1.4" height="1.4"/></g>
<g fill="none" stroke="#e0e0e0" stroke-width="1.2"><rect x="1456.4" y="103.6" width="4.4" height="4.4"/><rect x="1456.4" y="109.6" width="4.4" height="4.4"/></g>
<rect x="1456" y="115.5" width="5.5" height="5.5" fill="#e6e6e6"/>
<path d="M1465,105 L1468.5,102.5 L1468,106.5Z" fill="#e6e6e6"/><path d="M1467,104.5 C1472,106 1472,116 1465,119" fill="none" stroke="#e6e6e6" stroke-width="1.5"/>
<g fill="#e0e0e0"><rect x="1452.8" y="150" width="2" height="2"/><rect x="1452.8" y="153.5" width="2" height="2"/><rect x="1452.8" y="157" width="2" height="2"/><rect x="1456.5" y="150.5" width="4.5" height="1.2"/><rect x="1456.5" y="154" width="4.5" height="1.2"/><rect x="1456.5" y="157.5" width="4.5" height="1.2"/></g>
<path d="M1475.5,153 L1466.5,161 L1465,159.5Z" fill="#e6e6e6" stroke="#e6e6e6" stroke-width="1.2" stroke-linejoin="round"/>
<path d="M1465,160 C1461,159 1459,162 1458.5,164 C1458,166 1457.5,167 1456.8,168 C1460,168 1464,167 1466,163Z" fill="#e6e6e6"/>
<path d="M1452,185 C1455,182.5 1459,182 1462,184 L1462,186.5 C1459,188 1455,187.5 1452,185Z" fill="#e6e6e6"/><rect x="1463.5" y="184.2" width="11.5" height="2" fill="#e6e6e6"/>
<rect x="1454" y="193.8" width="11" height="2" fill="#e6e6e6"/><path d="M1466,194.8 L1474,189 C1476,192 1476,197 1474,200.5Z" fill="#e6e6e6"/>
<text x="1497" y="106.5" font-size="11.5" font-weight="bold" fill="#f0f0f0" font-family="'Liberation Sans'" textLength="26.5" lengthAdjust="spacingAndGlyphs">Color</text>
<rect x="1508.2" y="140.2" width="19.4" height="19.8" fill="#000" stroke="#cfcfcf" stroke-width="1.5"/>
<rect x="1495.8" y="128" width="23.6" height="23.4" fill="none" stroke="#7a7a7a" stroke-width="1"/>
<rect x="1497.5" y="129.5" width="20.2" height="20.2" fill="#fafafa" stroke="#3a3a3a" stroke-width="0.6"/>
<text x="1497" y="425.5" font-size="11.5" font-weight="bold" fill="#f0f0f0" font-family="'Liberation Sans'">Properties</text>
<rect x="1499" y="443.5" width="23" height="23.3" fill="#3a3a3a"/>
<path d="M1504,448.5 H1517 V452.2 H1515.8 V450.2 H1511.6 V461 H1513.6 V462.3 H1507.4 V461 H1509.4 V450.2 H1505.2 V452.2 H1504Z" fill="#e8e8e8"/>
<text x="1530" y="460.5" font-size="11" fill="#d8d8d8" font-family="'Liberation Sans'">Type</text>
<rect x="1487" y="472" width="49" height="1" fill="#474747"/>
<text x="1499" y="499.5" font-size="11" fill="#6c6c6c" font-family="'Liberation Sans'">W:</text>
<rect x="1519" y="488" width="17" height="17" fill="#4a4a4a"/>
<text x="1521.5" y="500.5" font-size="11" fill="#707070" font-family="'Liberation Sans'">13</text>
<text x="1503" y="535" font-size="11" fill="#d0d0d0" font-family="'Liberation Sans'">X:</text>
<rect x="1519" y="520" width="17" height="17.5" fill="#3a3a3a"/>
<text x="1521.5" y="533.5" font-size="11" fill="#e0e0e0" font-family="'Liberation Sans'">1.1</text>
<rect x="1497" y="568" width="39" height="15.5" fill="#484848"/>
<rect x="1497" y="597" width="39" height="14" fill="#484848"/>
<g fill="#e0e0e0"><path d="M1502,631 H1516 V635 H1514.8 V632.6 H1510.2 V645 H1512 V646.5 H1506 V645 H1507.8 V632.6 H1503.2 V635 H1502Z"/><path d="M1496,639 H1502.5 V641 H1501.8 V640.2 H1499.8 V645.4 H1500.8 V646.5 H1497.7 V645.4 H1498.7 V640.2 H1496.7 V641 H1496Z"/></g>
<rect x="1522" y="631" width="14" height="16" fill="#484848"/>
<g fill="none" stroke="#e0e0e0" stroke-width="1.1"><path d="M1503,672 L1506.5,664.5 L1510,672 M1501,672.8 H1512 M1503,681.5 L1506.5,674 L1510,681.5 M1501,682.3 H1512"/><path d="M1498,668.5 V681.5 M1496.2,670.5 L1498,668.5 L1499.8,670.5 M1496.2,679.5 L1498,681.5 L1499.8,679.5"/></g>
<rect x="1522" y="664" width="14" height="17" fill="#3a3a3a"/>
<text x="1524" y="677" font-size="11.5" fill="#e0e0e0" font-family="'Liberation Sans'">(A</text>
<text x="1497" y="744.5" font-size="11.5" font-weight="bold" fill="#f0f0f0" font-family="'Liberation Sans'" textLength="31.5" lengthAdjust="spacingAndGlyphs">Layers</text>
<rect x="1491" y="765.5" width="45" height="18" fill="#474747"/>
<circle cx="1503.5" cy="773" r="3.3" fill="none" stroke="#e0e0e0" stroke-width="1.4"/><path d="M1506,775.5 L1509.5,779" stroke="#e0e0e0" stroke-width="1.8"/>
<text x="1514" y="779" font-size="11.5" fill="#e0e0e0" font-family="'Liberation Sans'">Kind</text>
<rect x="1487" y="789" width="49" height="1" fill="#474747"/>
<rect x="1491" y="797" width="45" height="18" fill="#474747"/>
<text x="1499" y="810.5" font-size="11.5" fill="#e0e0e0" font-family="'Liberation Sans'">Normal</text>
<rect x="1487" y="819.5" width="49" height="1" fill="#474747"/>
<text x="1493" y="841" font-size="11.5" fill="#d8d8d8" font-family="'Liberation Sans'">Lock:</text>
<rect x="1530.5" y="830.5" width="6" height="12" fill="none" stroke="#bdbdbd" stroke-width="1"/>
<rect x="1520.5" y="857.5" width="16" height="10" fill="#606060" stroke="#cfcfcf" stroke-width="1"/>
</svg>

</body></html>
